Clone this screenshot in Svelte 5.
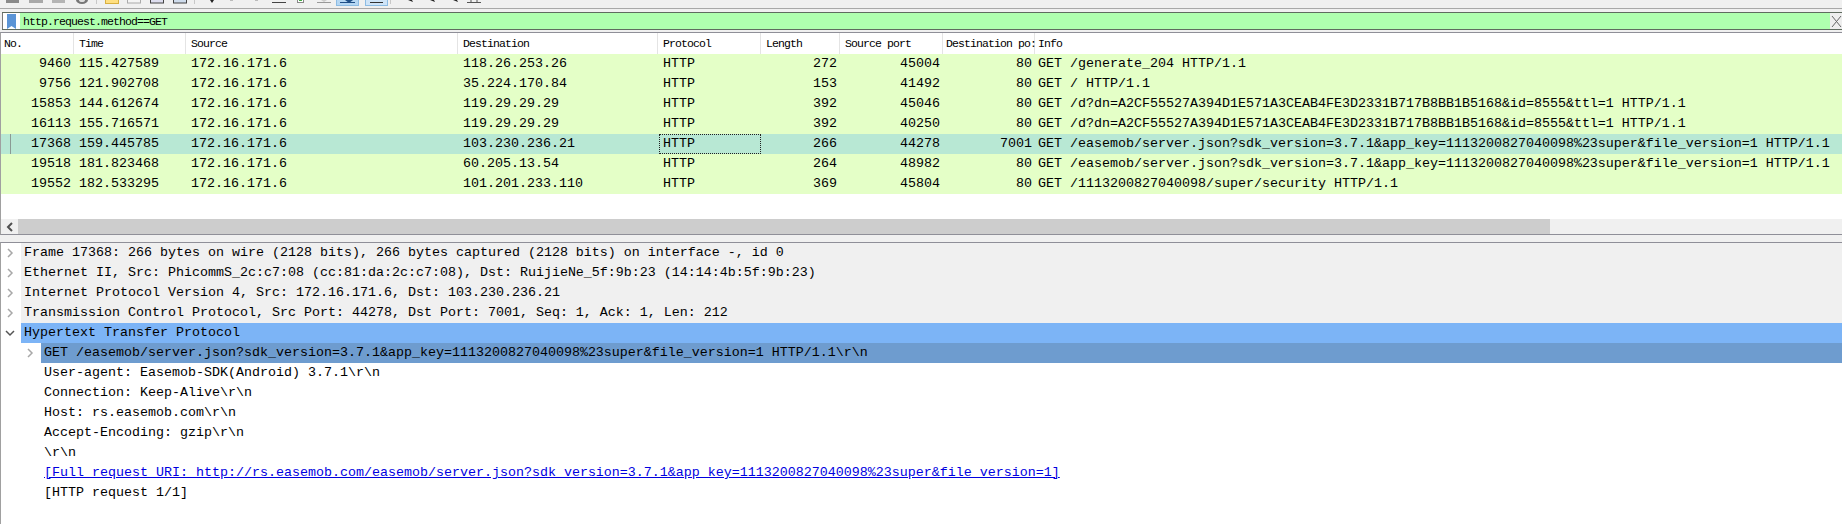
<script>
    const cols = ["No.", "Time", "Source", "Destination", "Protocol", "Length", "Source port", "Destination po:", "Info"];
    const key = "sdk_version=3.7.1&app_key=1113200827040098%23super&file_version=1";
    const dn = "/d?dn=A2CF55527A394D1E571A3CEAB4FE3D2331B717B8BB1B5168&id=8555&ttl=1 HTTP/1.1";

    const packets = [
        ["9460", "115.427589", "118.26.253.26", "272", "45004", "80", "GET /generate_204 HTTP/1.1"],
        ["9756", "121.902708", "35.224.170.84", "153", "41492", "80", "GET / HTTP/1.1"],
        ["15853", "144.612674", "119.29.29.29", "392", "45046", "80", "GET " + dn],
        ["16113", "155.716571", "119.29.29.29", "392", "40250", "80", "GET " + dn],
        ["17368", "159.445785", "103.230.236.21", "266", "44278", "7001", `GET /easemob/server.json?${key} HTTP/1.1`],
        ["19518", "181.823468", "60.205.13.54", "264", "48982", "80", `GET /easemob/server.json?${key} HTTP/1.1`],
        ["19552", "182.533295", "101.201.233.110", "369", "45804", "80", "GET /1113200827040098/super/security HTTP/1.1"],
    ];

    const layers = [
        "Frame 17368: 266 bytes on wire (2128 bits), 266 bytes captured (2128 bits) on interface -, id 0",
        "Ethernet II, Src: PhicommS_2c:c7:08 (cc:81:da:2c:c7:08), Dst: RuijieNe_5f:9b:23 (14:14:4b:5f:9b:23)",
        "Internet Protocol Version 4, Src: 172.16.171.6, Dst: 103.230.236.21",
        "Transmission Control Protocol, Src Port: 44278, Dst Port: 7001, Seq: 1, Ack: 1, Len: 212",
    ];

    const headers = [
        "User-agent: Easemob-SDK(Android) 3.7.1\\r\\n",
        "Connection: Keep-Alive\\r\\n",
        "Host: rs.easemob.com\\r\\n",
        "Accept-Encoding: gzip\\r\\n",
        "\\r\\n",
    ];
</script>

<div class="window">
    <div class="toolbar">
        <svg width="1842" height="8" viewBox="0 0 1842 8">
            <rect x="6" y="0" width="13" height="3" fill="#8a8a8a" />
            <rect x="29" y="0" width="14" height="3" fill="#a8a8a8" />
            <rect x="52" y="0" width="13" height="3" fill="#b4b4b4" />
            <path d="M76 0 a6 4 0 0 0 12 0 z" fill="#777" />
            <path d="M79 0 a3 2 0 0 0 6 0 z" fill="#ddd" />
            <rect x="96" y="0" width="1" height="4" fill="#c8c8c8" />
            <rect x="105.500" y="-1" width="13" height="4.500" fill="#ffdf80" stroke="#d8b040" />
            <rect x="127.500" y="-1" width="13" height="4" fill="#f4f4f4" stroke="#aaa" />
            <rect x="150.500" y="-1" width="13" height="4" fill="#dde" stroke="#444" />
            <rect x="173.500" y="-1" width="13" height="4" fill="#cfdcec" stroke="#444" />
            <rect x="194" y="0" width="1" height="4" fill="#c8c8c8" />
            <path d="M210 0 h4 l-2 3 z" fill="#222" />
            <rect x="230" y="0" width="3" height="1" fill="#bbb" />
            <rect x="255" y="0" width="3" height="1" fill="#bbb" />
            <rect x="272" y="2" width="14" height="1" fill="#444" />
            <rect x="297.500" y="-1" width="6" height="3.500" fill="#fff" stroke="#888" />
            <rect x="299" y="0" width="3" height="1" fill="#4a4" />
            <path d="M321 0 l3 2 l3 -2 z" fill="#ccc" />
            <rect x="317" y="2" width="14" height="1" fill="#999" />
            <rect x="336.500" y="-1" width="22" height="6.500" fill="#b5d7f3" stroke="#8cbce4" />
            <path d="M345 0 h8 l-4 3 z" fill="#1f4f87" />
            <rect x="340" y="2" width="15" height="1" fill="#1f4f87" />
            <rect x="365.500" y="-1" width="22" height="6.500" fill="#cfe4f7" stroke="#8cbce4" />
            <rect x="370" y="2" width="13" height="1" fill="#333" />
            <rect x="390" y="0" width="1" height="4" fill="#c8c8c8" />
            <path d="M408 0 h4 l1 2 z" fill="#222" />
            <path d="M430 0 h4 l1 2 z" fill="#222" />
            <path d="M453 0 h4 l1 2 z" fill="#222" />
            <path d="M467 2.500 h14 M471 0 v2 M477 0 v2" stroke="#555" fill="none" />
        </svg>
    </div>

    <div class="filter">
        <div class="bookmark">
            <svg width="9" height="15" viewBox="0 0 9 15"><path d="M0 0 h9 v15 l-4.500 -3 l-4.500 3 z" fill="#5b94d6" /></svg>
        </div>
        <span class="filter-text">http.request.method==GET</span>
        <div class="clear">
            <svg width="11" height="13" viewBox="0 0 11 13"><path d="M1 1 L10 12 M10 1 L1 12" stroke="#666" fill="none" /></svg>
        </div>
    </div>

    <div class="list">
        <div class="row head">
            {#each cols as c}
                <div class="cell">{c}</div>
            {/each}
        </div>
        {#each packets as p, i}
            <div class="row packet" class:selected={i === 4}>
                <div class="cell num">{p[0]}</div>
                <div class="cell">{p[1]}</div>
                <div class="cell">172.16.171.6</div>
                <div class="cell">{p[2]}</div>
                <div class="cell" class:focus={i === 4}>HTTP</div>
                <div class="cell num">{p[3]}</div>
                <div class="cell num">{p[4]}</div>
                <div class="cell num">{p[5]}</div>
                <div class="cell info">{p[6]}</div>
            </div>
        {/each}
        <div class="list-space"></div>
        <div class="hscroll">
            <div class="arrow">
                <svg width="8" height="10" viewBox="0 0 8 10"><path d="M6 1 L2 5 L6 9" stroke="#505050" stroke-width="2" fill="none" /></svg>
            </div>
            <div class="thumb"></div>
        </div>
    </div>

    <div class="splitter"></div>

    <div class="tree">
        {#each layers as l}
            <div class="node top">
                <svg class="chev" width="8" height="10" viewBox="0 0 8 10"><path d="M2 1 L6 5 L2 9" stroke="#a8a8a8" stroke-width="1.500" fill="none" /></svg>
                <span class="label">{l}</span>
            </div>
        {/each}
        <div class="node http">
            <svg class="chev" width="10" height="8" viewBox="0 0 10 8"><path d="M1 2 L5 6 L9 2" stroke="#555" stroke-width="1.500" fill="none" /></svg>
            <span class="label">Hypertext Transfer Protocol</span>
        </div>
        <div class="node get">
            <svg class="chev" width="8" height="10" viewBox="0 0 8 10"><path d="M2 1 L6 5 L2 9" stroke="#a8a8a8" stroke-width="1.500" fill="none" /></svg>
            <span class="label">GET /easemob/server.json?{key} HTTP/1.1\r\n</span>
        </div>
        {#each headers as h}
            <div class="node child"><span class="label">{h}</span></div>
        {/each}
        <div class="node child"><span class="label link">[Full request URI: http://rs.easemob.com/easemob/server.json?{key}]</span></div>
        <div class="node child"><span class="label">[HTTP request 1/1]</span></div>
    </div>
</div>

<style>
    :global(body) {
        background: #ffffff;
    }
    .window {
        width: 1842px;
        height: 524px;
        overflow: hidden;
        display: flex;
        flex-direction: column;
        font-family: "Liberation Mono", monospace;
        font-size: 13.33px;
        color: #000000;
        background: #f0f0f0;
    }
    .toolbar {
        height: 8px;
        flex: none;
        border-bottom: 1px solid #a8a8a8;
        margin-bottom: 3px;
    }
    .toolbar svg {
        display: block;
    }
    .filter {
        height: 16px;
        flex: none;
        margin: 0 0 2px 2px;
        display: flex;
        align-items: center;
        background: #afffaf;
        border-top: 1px solid #5f6b5f;
        border-bottom: 1px solid #5f6b5f;
    }
    .bookmark {
        width: 18px;
        height: 16px;
        flex: none;
        display: flex;
        align-items: center;
        justify-content: center;
        background: #ffffff;
        border-left: 1px solid #777777;
        box-sizing: border-box;
    }
    .filter-text {
        flex: 1;
        padding-left: 3px;
        font-size: 11.5px;
        letter-spacing: -0.9px;
    }
    .clear {
        width: 12px;
        height: 16px;
        display: flex;
        align-items: center;
        justify-content: center;
        background: #eeeeee;
    }
    .list {
        height: 201px;
        flex: none;
        display: flex;
        flex-direction: column;
        background: #ffffff;
        border-top: 1px solid #8f8f98;
        border-left: 1px solid #a0a0a0;
        border-bottom: 1px solid #8f8f98;
    }
    .row {
        display: grid;
        grid-template-columns: 73px 112px 272px 200px 103px 79px 103px 92px 1fr;
        white-space: nowrap;
    }
    .head {
        height: 21px;
        font-size: 11.5px;
        letter-spacing: -0.9px;
        line-height: 21px;
        flex: none;
    }
    .head .cell {
        padding-left: 5px;
        border-right: 1px solid #e4e4e4;
        box-sizing: border-box;
    }
    .head .cell:first-child {
        padding-left: 3px;
    }
    .head .cell:nth-child(8) {
        padding-left: 3px;
    }
    .head .cell:last-child {
        padding-left: 3px;
        border-right: none;
    }
    .packet {
        height: 20px;
        line-height: 20px;
        flex: none;
        background: #e4ffc7;
    }
    .packet .cell {
        padding-left: 5px;
        overflow: visible;
        box-sizing: border-box;
    }
    .packet .num {
        text-align: right;
        padding: 0 3px 0 0;
    }
    .packet .info {
        padding-left: 3px;
    }
    .selected {
        position: relative;
        background: #b8e8d4;
    }
    .selected::before {
        content: "";
        position: absolute;
        left: 9px;
        top: 0;
        bottom: 0;
        width: 1px;
        background: #8a9a94;
    }
    .packet .focus {
        outline: 1px dotted #222222;
        outline-offset: -1px;
        padding-left: 4px;
        margin-left: 1px;
    }
    .list-space {
        height: 25px;
        flex: none;
    }
    .hscroll {
        height: 15px;
        flex: none;
        display: flex;
        background: #f0f0f0;
    }
    .arrow {
        width: 17px;
        display: flex;
        align-items: center;
        justify-content: center;
    }
    .thumb {
        width: 1532px;
        background: #cdcdcd;
    }
    .splitter {
        height: 7px;
        flex: none;
    }
    .tree {
        flex: 1;
        background: #ffffff;
        border-top: 1px solid #8f8f98;
        border-left: 1px solid #a0a0a0;
    }
    .node {
        position: relative;
        height: 20px;
        line-height: 20px;
        white-space: nowrap;
    }
    .chev {
        position: absolute;
        top: 5px;
    }
    .top {
        margin-left: 20px;
        padding-left: 3px;
        background: #f0f0f0;
    }
    .top .chev {
        left: -15px;
    }
    .http {
        margin-left: 20px;
        padding-left: 3px;
        background: #7cb4f6;
    }
    .http .chev {
        left: -16px;
        top: 6px;
    }
    .get {
        margin-left: 40px;
        padding-left: 3px;
        background: #6e9ccf;
    }
    .get .chev {
        left: -15px;
    }
    .child {
        padding-left: 43px;
    }
    .link {
        color: #0000e0;
        text-decoration: underline;
    }
</style>
